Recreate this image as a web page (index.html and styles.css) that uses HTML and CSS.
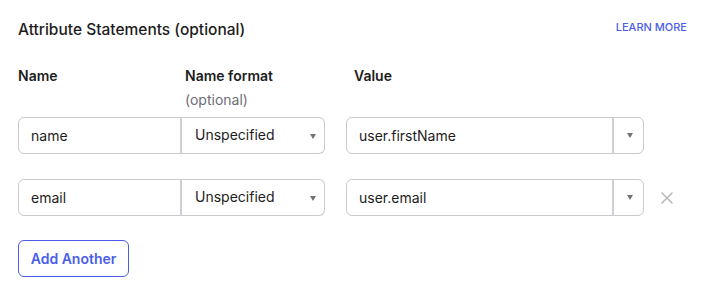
FILE: index.html
```html
<!DOCTYPE html>
<html lang="en">
<head>
<meta charset="utf-8">
<link rel="stylesheet" href="styles.css">
</head>
<body>
<div class="panel">
  <div class="head">
    <h2 class="title">Attribute Statements (optional)</h2>
    <a class="learn" href="#">LEARN MORE</a>
  </div>
  <div class="grid">
    <div class="col-h">Name</div>
    <div class="col-h">Name format<span class="sub">(optional)</span></div>
    <div class="col-h">Value</div>
    <div></div>

    <div class="pair">
      <div class="field left">name</div>
      <div class="field select">Unspecified<span class="caret"></span></div>
    </div>
    <div></div>
    <div class="combo">
      <div class="combo-text">user.firstName</div>
      <div class="combo-btn"><span class="caret"></span></div>
    </div>
    <div></div>

    <div class="pair">
      <div class="field left">email</div>
      <div class="field select">Unspecified<span class="caret"></span></div>
    </div>
    <div></div>
    <div class="combo">
      <div class="combo-text">user.email</div>
      <div class="combo-btn"><span class="caret"></span></div>
    </div>
    <div class="remove">
      <svg width="12" height="12" viewBox="0 0 12 12"><path d="M1 1L11 11M11 1L1 11" stroke="#b9b9bd" stroke-width="1.6" stroke-linecap="round"/></svg>
    </div>
  </div>
  <button class="add">Add Another</button>
</div>
</body>
</html>
```

FILE: styles.css
```css
* { box-sizing: border-box; }
html, body { margin: 0; background: #fff; }
body {
  font-family: Inter, "Noto Sans", sans-serif;
  color: #1d1d21;
  font-size: 14px;
}
.panel { padding: 20px 21px 0 18px; }
.head {
  display: flex;
  justify-content: space-between;
  align-items: center;
  height: 20px;
}
.title {
  margin: 0;
  font-size: 15.5px;
  font-weight: 500;
  line-height: 20px;
}
.learn {
  color: #4a5ee8;
  font-size: 11px;
  font-weight: 500;
  text-decoration: none;
  margin-top: -6px;
}
.grid {
  display: grid;
  grid-template-columns: 163px 145px 20px 298px 29px;
  margin-top: 26px;
  row-gap: 0;
}
.col-h {
  font-weight: 600;
  font-size: 14px;
  line-height: 20px;
  height: 51px;
}
.col-h:nth-child(1) { grid-column: 1; }
.col-h:nth-child(2) { grid-column: 2; padding-left: 4px; }
.col-h:nth-child(3) { grid-column: 4; padding-left: 8px; }
.col-h:nth-child(4) { grid-column: 5; }
.sub {
  display: block;
  font-weight: 400;
  color: #6e6e78;
  margin-top: 4px;
}
.pair {
  grid-column: 1 / span 2;
  display: flex;
  height: 37px;
  margin-bottom: 25px;
}
.field {
  border: 1px solid #c9c9ce;
  height: 37px;
  display: flex;
  align-items: center;
  font-size: 14px;
}
.left {
  width: 163px;
  flex: none;
  border-radius: 6px 0 0 6px;
  padding-left: 12px;
}
.select {
  width: 145px;
  flex: none;
  border-left: 2px solid #cfcfd3;
  border-radius: 0 6px 6px 0;
  padding-left: 13px;
  position: relative;
  margin-left: -1px;
  padding-bottom: 2px;
}
.select .caret { position: absolute; right: 8px; top: 16px; }
.caret {
  width: 0; height: 0;
  border-left: 3.5px solid transparent;
  border-right: 3.5px solid transparent;
  border-top: 5px solid #727277;
}
.combo {
  grid-column: 4;
  display: flex;
  height: 37px;
  border: 1px solid #c9c9ce;
  border-radius: 6px;
}
.combo-text {
  flex: 1;
  display: flex;
  align-items: center;
  padding-left: 12px;
  border-right: 2px solid #cfcfd3;
}
.combo-btn {
  width: 29px;
  display: flex;
  align-items: center;
  justify-content: center;
  padding-left: 2px;
}
.remove {
  grid-column: 5;
  display: flex;
  align-items: center;
  justify-content: flex-end;
  height: 37px;
}
.add {
  display: block;
  margin-top: -1px;
  height: 37px;
  width: 111px;
  border: 1px solid #4a5ee8;
  border-radius: 6px;
  background: #fff;
  color: #4a5ee8;
  font-family: Inter, "Noto Sans", sans-serif;
  font-weight: 600;
  font-size: 14px;
  padding: 0;
}
```
